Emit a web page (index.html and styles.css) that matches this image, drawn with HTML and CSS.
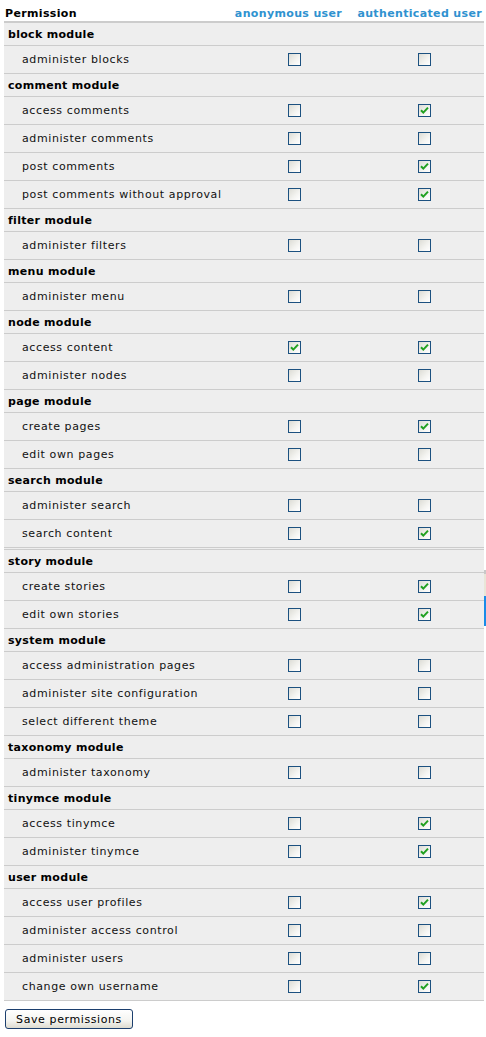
FILE: index.html
```html
<!DOCTYPE html>
<html lang="en">
<head>
    <meta charset="UTF-8">
    <title>Permissions</title>
    <link rel="stylesheet" href="styles.css">
</head>
<body>

<div class="page">
    <table class="perms">
        <thead>
            <tr>
                <th class="name-col">Permission</th>
                <th class="role-col">anonymous user</th>
                <th class="role-col last">authenticated user</th>
            </tr>
        </thead>
        <tbody>
            <tr class="module"><td colspan="3">block module</td></tr>
            <tr><td class="perm">administer blocks</td><td class="check"><span class="cb"></span></td><td class="check last"><span class="cb"></span></td></tr>

            <tr class="module"><td colspan="3">comment module</td></tr>
            <tr><td class="perm">access comments</td><td class="check"><span class="cb"></span></td><td class="check last"><span class="cb on"><svg viewBox="0 0 11 11"><path d="M2 5.2 L4.3 7.6 L9 2.6"/></svg></span></td></tr>
            <tr><td class="perm">administer comments</td><td class="check"><span class="cb"></span></td><td class="check last"><span class="cb"></span></td></tr>
            <tr><td class="perm">post comments</td><td class="check"><span class="cb"></span></td><td class="check last"><span class="cb on"><svg viewBox="0 0 11 11"><path d="M2 5.2 L4.3 7.6 L9 2.6"/></svg></span></td></tr>
            <tr><td class="perm">post comments without approval</td><td class="check"><span class="cb"></span></td><td class="check last"><span class="cb on"><svg viewBox="0 0 11 11"><path d="M2 5.2 L4.3 7.6 L9 2.6"/></svg></span></td></tr>

            <tr class="module"><td colspan="3">filter module</td></tr>
            <tr><td class="perm">administer filters</td><td class="check"><span class="cb"></span></td><td class="check last"><span class="cb"></span></td></tr>

            <tr class="module"><td colspan="3">menu module</td></tr>
            <tr><td class="perm">administer menu</td><td class="check"><span class="cb"></span></td><td class="check last"><span class="cb"></span></td></tr>

            <tr class="module"><td colspan="3">node module</td></tr>
            <tr><td class="perm">access content</td><td class="check"><span class="cb on"><svg viewBox="0 0 11 11"><path d="M2 5.2 L4.3 7.6 L9 2.6"/></svg></span></td><td class="check last"><span class="cb on"><svg viewBox="0 0 11 11"><path d="M2 5.2 L4.3 7.6 L9 2.6"/></svg></span></td></tr>
            <tr><td class="perm">administer nodes</td><td class="check"><span class="cb"></span></td><td class="check last"><span class="cb"></span></td></tr>

            <tr class="module"><td colspan="3">page module</td></tr>
            <tr><td class="perm">create pages</td><td class="check"><span class="cb"></span></td><td class="check last"><span class="cb on"><svg viewBox="0 0 11 11"><path d="M2 5.2 L4.3 7.6 L9 2.6"/></svg></span></td></tr>
            <tr><td class="perm">edit own pages</td><td class="check"><span class="cb"></span></td><td class="check last"><span class="cb"></span></td></tr>

            <tr class="module"><td colspan="3">search module</td></tr>
            <tr><td class="perm">administer search</td><td class="check"><span class="cb"></span></td><td class="check last"><span class="cb"></span></td></tr>
            <tr><td class="perm">search content</td><td class="check"><span class="cb"></span></td><td class="check last"><span class="cb on"><svg viewBox="0 0 11 11"><path d="M2 5.2 L4.3 7.6 L9 2.6"/></svg></span></td></tr>
            <tr class="spacer"><td colspan="3"></td></tr>

            <tr class="module"><td colspan="3">story module</td></tr>
            <tr><td class="perm">create stories</td><td class="check"><span class="cb"></span></td><td class="check last"><span class="cb on"><svg viewBox="0 0 11 11"><path d="M2 5.2 L4.3 7.6 L9 2.6"/></svg></span></td></tr>
            <tr><td class="perm">edit own stories</td><td class="check"><span class="cb"></span></td><td class="check last"><span class="cb on"><svg viewBox="0 0 11 11"><path d="M2 5.2 L4.3 7.6 L9 2.6"/></svg></span></td></tr>

            <tr class="module"><td colspan="3">system module</td></tr>
            <tr><td class="perm">access administration pages</td><td class="check"><span class="cb"></span></td><td class="check last"><span class="cb"></span></td></tr>
            <tr><td class="perm">administer site configuration</td><td class="check"><span class="cb"></span></td><td class="check last"><span class="cb"></span></td></tr>
            <tr><td class="perm">select different theme</td><td class="check"><span class="cb"></span></td><td class="check last"><span class="cb"></span></td></tr>

            <tr class="module"><td colspan="3">taxonomy module</td></tr>
            <tr><td class="perm">administer taxonomy</td><td class="check"><span class="cb"></span></td><td class="check last"><span class="cb"></span></td></tr>

            <tr class="module"><td colspan="3">tinymce module</td></tr>
            <tr><td class="perm">access tinymce</td><td class="check"><span class="cb"></span></td><td class="check last"><span class="cb on"><svg viewBox="0 0 11 11"><path d="M2 5.2 L4.3 7.6 L9 2.6"/></svg></span></td></tr>
            <tr><td class="perm">administer tinymce</td><td class="check"><span class="cb"></span></td><td class="check last"><span class="cb on"><svg viewBox="0 0 11 11"><path d="M2 5.2 L4.3 7.6 L9 2.6"/></svg></span></td></tr>

            <tr class="module"><td colspan="3">user module</td></tr>
            <tr><td class="perm">access user profiles</td><td class="check"><span class="cb"></span></td><td class="check last"><span class="cb on"><svg viewBox="0 0 11 11"><path d="M2 5.2 L4.3 7.6 L9 2.6"/></svg></span></td></tr>
            <tr><td class="perm">administer access control</td><td class="check"><span class="cb"></span></td><td class="check last"><span class="cb"></span></td></tr>
            <tr><td class="perm">administer users</td><td class="check"><span class="cb"></span></td><td class="check last"><span class="cb"></span></td></tr>
            <tr><td class="perm">change own username</td><td class="check"><span class="cb"></span></td><td class="check last"><span class="cb on"><svg viewBox="0 0 11 11"><path d="M2 5.2 L4.3 7.6 L9 2.6"/></svg></span></td></tr>
        </tbody>
    </table>

    <button class="save">Save permissions</button>
</div>

<!-- bit of the window scrollbar that shows at the right edge -->
<div class="edge"></div>

</body>
</html>
```

FILE: styles.css
```css
/* Global styles */
body {
    font-family: "DejaVu Sans", Verdana, sans-serif;
    font-size: 11px;
    letter-spacing: 0.6px;
    color: #000;
    background-color: #fff;
    margin: 0;
    padding: 0;
}

.page {
    padding-left: 4px;
}

/* Permission table */
.perms {
    width: 480px;
    border-collapse: collapse;
    table-layout: fixed;
    margin-bottom: 8px;
}

.perms th {
    height: 22px;
    padding: 0 0 1px 2px;
    box-sizing: border-box;
    text-align: left;
    font-weight: bold;
    letter-spacing: 0.35px;
    line-height: 13px;
    white-space: nowrap;
    border-bottom: 2px solid #ccc;
    vertical-align: bottom;
}

.perms th.name-col {
    width: 226px;
    padding-left: 1px;
    color: #000;
}

.perms th.role-col {
    width: 121px;
    color: #2f92d0;
}

.perms th.role-col.last {
    width: 127px;
}

.perms td {
    background-color: #eee;
    border-bottom: 1px solid #ccc;
    padding: 0;
    white-space: nowrap;
    vertical-align: middle;
}

.perms .module td {
    height: 22px;
    padding-left: 4px;
    font-weight: bold;
    letter-spacing: 0.3px;
}

.perms td.perm {
    height: 27px;
    padding-left: 18px;
    color: #111;
}

.perms td.check {
    text-align: center;
    line-height: 0;
    padding-left: 1px;
}

.perms td.check.last {
    padding-left: 10px;
}

.perms .spacer td {
    height: 1px;
    line-height: 0;
    font-size: 0;
}

/* XP style checkboxes */
.cb {
    display: inline-block;
    box-sizing: border-box;
    width: 13px;
    height: 13px;
    border: 1px solid #1c5180;
    background: linear-gradient(135deg, #dcdcd5 0%, #f4f4f1 60%, #fff 100%);
    vertical-align: middle;
}

.cb svg {
    display: block;
    width: 11px;
    height: 11px;
}

.cb svg path {
    fill: none;
    stroke: #21a121;
    stroke-width: 2;
}

/* Submit button */
.save {
    font-family: "DejaVu Sans", Verdana, sans-serif;
    font-size: 11px;
    letter-spacing: 0.6px;
    color: #000;
    height: 20px;
    width: 128px;
    margin-left: 1px;
    padding: 0;
    border: 1px solid #1c3f6e;
    border-radius: 3px;
    background: linear-gradient(#fff 0%, #f4f4f0 60%, #dedbd0 100%);
    cursor: pointer;
}

.edge {
    position: absolute;
    left: 484px;
    top: 570px;
    width: 2px;
    height: 56px;
    background: linear-gradient(#c8c8c8 0px, #c8c8c8 4px, #e9e6d8 4px, #e9e6d8 26px, #1a8ce8 26px, #1a8ce8 100%);
}
```
